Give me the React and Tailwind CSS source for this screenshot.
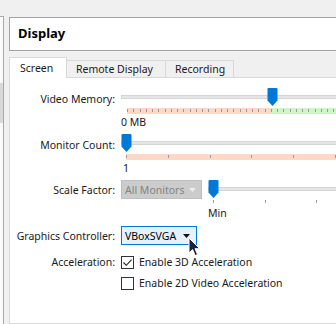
const range = (n) => Array.from({ length: n }, (_, i) => i)

// slider thumb: blue block with a point at the bottom
function Thumb() {
  return (
    <svg width="11" height="18" viewBox="0 0 11 18" className="absolute top-0 left-0">
      <path d="M0.5 1 Q0.5 0 1.5 0 H9.5 Q10.5 0 10.5 1 V12.5 L5.5 18 L0.5 12.5 Z" fill="#0078d7" />
    </svg>
  )
}

function Groove() {
  return <div className="absolute left-0 right-0 top-[7px] h-[4px] bg-[#e6e6e6] border border-[#d4d4d4]" />
}

function Label({ children, className = '' }) {
  return (
    <div className={`w-[105px] shrink-0 text-right leading-[14px] ${className}`}>{children}</div>
  )
}

function Combo({ text, disabled }) {
  return (
    <div
      className={`relative flex items-center h-[19px] border pl-[3px] ${
        disabled
          ? 'w-[81px] bg-[#cccccc] border-[#bfbfbf] text-[#838383]'
          : 'w-[76px] bg-[#e5f1fb] border-[#0078d7] text-black'
      }`}
    >
      <span className="leading-[14px]">{text}</span>
      <svg
        width="7"
        height="4"
        viewBox="0 0 7 4"
        className={`absolute top-[7px] ${disabled ? 'right-[5px]' : 'right-[6px]'}`}
      >
        <path d="M0 0 H7 L3.5 4 Z" fill={disabled ? '#ececec' : '#111'} />
      </svg>
    </div>
  )
}

function Checkbox({ checked, label }) {
  return (
    <div className="flex items-center h-[18px]">
      <div className="w-[13px] h-[13px] border border-[#333] bg-white flex items-center justify-center">
        {checked && (
          <svg width="11" height="11" viewBox="0 0 11 11">
            <path d="M1.5 5.5 L4.3 8.3 L9.6 2.6" fill="none" stroke="#222" strokeWidth="1.1" />
          </svg>
        )}
      </div>
      <span className="ml-[5px] leading-[14px]">{label}</span>
    </div>
  )
}

export default function App() {
  return (
    <div
      className="w-[336px] h-[324px] overflow-hidden bg-[#f0f0f0] flex text-[10.5px] text-[#1a1a1a]"
      style={{ fontFamily: '"Noto Sans", "Liberation Sans", sans-serif' }}
    >
      {/* left list edge */}
      <div className="w-[4px] shrink-0 mt-[16px] border-t border-r border-[#a9a9a9] bg-[#fafafa]">
        <div className="mt-[66px] h-[40px] w-[3px] bg-[#d9d9d9]" />
      </div>

      <div className="ml-[5px] w-[400px] shrink-0 flex flex-col">
        {/* page title */}
        <div className="mt-[17px] h-[34px] bg-white border border-[#a3a3a3] flex items-center pl-[8px]">
          <span className="font-bold text-[13px] text-black">Display</span>
        </div>

        {/* tabs */}
        <div className="mt-[6px] h-[20px] flex items-end">
          <div className="relative z-10 -mb-px w-[58px] h-[21px] bg-white border border-b-0 border-[#d9d9d9] pl-[10px] flex items-center">
            <span className="leading-[14px]">Screen</span>
          </div>
          <div className="w-[99px] h-[17px] bg-[#f0f0f0] border border-l-0 border-b-0 border-[#d9d9d9] pl-[9px] flex items-center">
            <span className="leading-[14px]">Remote Display</span>
          </div>
          <div className="w-[68px] h-[17px] bg-[#f0f0f0] border border-l-0 border-b-0 border-[#d9d9d9] pl-[9px] flex items-center">
            <span className="leading-[14px]">Recording</span>
          </div>
        </div>

        {/* tab page */}
        <div className="flex-1 bg-white border border-r-0 border-[#d9d9d9] pt-[10px]">
          {/* Video Memory */}
          <div className="flex">
            <Label className="pt-[4px]">Video Memory:</Label>
            <div className="ml-[6px] flex-1">
              <div className="relative h-[18px]">
                <Groove />
                <div className="absolute left-[146px] top-0 w-[11px] h-[18px]">
                  <Thumb />
                </div>
              </div>
              <div className="relative mt-[2px] ml-[6px] h-[6px] flex">
                <div className="w-[145px] h-full bg-[#fdd8c6]" />
                <div className="flex-1 h-full bg-[#cdf5c6]" />
                <div className="absolute inset-0 flex">
                  {range(40).map((i) => (
                    <div key={i} className="w-[6.25px] shrink-0">
                      <div className="w-px h-[3px] mt-[1px] bg-[#9a9a9a]" />
                    </div>
                  ))}
                </div>
              </div>
              <div className="h-[14px] leading-[14px] pt-[1px]">0 MB</div>
            </div>
          </div>

          {/* Monitor Count */}
          <div className="flex mt-[6px]">
            <Label className="pt-[4px]">Monitor Count:</Label>
            <div className="ml-[6px] flex-1">
              <div className="relative h-[18px]">
                <Groove />
                <Thumb />
              </div>
              <div className="relative mt-[2px] ml-[5px] h-[6px] bg-[#fdd8c6]">
                <div className="absolute inset-0 flex">
                  {range(7).map((i) => (
                    <div key={i} className="w-[41.75px] shrink-0">
                      <div className="w-px h-[3px] mt-[1px] bg-[#9a9a9a]" />
                    </div>
                  ))}
                </div>
              </div>
              <div className="h-[14px] leading-[14px] pt-[1px] pl-[2px]">1</div>
            </div>
          </div>

          {/* Scale Factor */}
          <div className="flex mt-[6px]">
            <Label className="pt-[3px]">Scale Factor:</Label>
            <div className="ml-[6px] flex-1 flex">
              <Combo text="All Monitors" disabled />
              <div className="ml-[6px] flex-1">
                <div className="relative h-[18px]">
                  <Groove />
                  <Thumb />
                </div>
                <div className="mt-[2px] ml-[5px] h-[6px] flex">
                  {range(4).map((i) => (
                    <div key={i} className="w-[51.5px] shrink-0">
                      <div className="w-px h-[3px] bg-[#9a9a9a]" />
                    </div>
                  ))}
                </div>
                <div className="h-[14px] leading-[14px]">Min</div>
              </div>
            </div>
          </div>

          {/* Graphics Controller */}
          <div className="flex mt-[6px] items-center">
            <Label>Graphics Controller:</Label>
            <div className="ml-[6px] relative">
              <Combo text="VBoxSVGA" />
              {/* mouse pointer */}
              <svg
                width="13"
                height="20"
                viewBox="0 0 13 20"
                className="absolute left-[67px] top-[11px]"
              >
                <path
                  d="M1 1 L1 16 L4.6 12.6 L7.2 18.6 L9.6 17.6 L7 11.7 L11.8 11.7 Z"
                  fill="#17233f"
                  stroke="#ffffff"
                  strokeWidth="1"
                  strokeLinejoin="round"
                />
              </svg>
            </div>
          </div>

          {/* Acceleration */}
          <div className="flex mt-[8px] items-center">
            <Label>Acceleration:</Label>
            <div className="ml-[6px]">
              <Checkbox checked label="Enable 3D Acceleration" />
            </div>
          </div>
          <div className="flex mt-[3px] items-center">
            <div className="w-[105px] shrink-0" />
            <div className="ml-[6px]">
              <Checkbox label="Enable 2D Video Acceleration" />
            </div>
          </div>
        </div>
      </div>
    </div>
  )
}
